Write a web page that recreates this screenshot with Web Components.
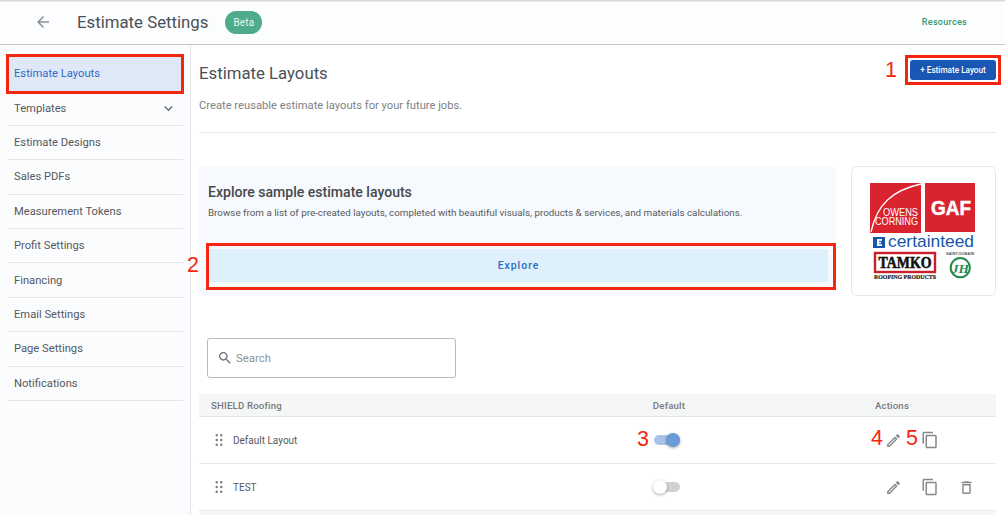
<!DOCTYPE html>
<html lang="en">
<head>
<meta charset="utf-8">
<title>Estimate Settings</title>
<style>
  html, body { margin: 0; height: 100%; overflow: hidden; }
  body { background: #fcfdfe; font-family: Roboto, "Liberation Sans", sans-serif; color: #4a4f54; }
</style>
</head>
<body>
<estimate-page></estimate-page>

<script>
const ICONS = {
  back: "M20 11H7.83l5.59-5.59L12 4l-8 8 8 8 1.41-1.41L7.83 13H20v-2z",
  chevron: "M7.41 8.59L12 13.17l4.59-4.58L18 10l-6 6-6-6z",
  search: "M15.5 14h-.79l-.28-.27C15.41 12.59 16 11.11 16 9.5 16 5.91 13.09 3 9.5 3S3 5.91 3 9.5 5.91 16 9.5 16c1.61 0 3.09-.59 4.23-1.57l.27.28v.79l5 4.99L20.49 19l-4.99-5zm-6 0C7.01 14 5 11.99 5 9.5S7.01 5 9.5 5 14 7.01 14 9.5 11.99 14 9.5 14z",
  edit: "M3 17.25V21h3.75L17.81 9.94l-3.75-3.75L3 17.25zM5.92 19H5v-.92l9.06-9.06.92.92L5.92 19zM20.71 5.63l-2.34-2.34c-.2-.2-.45-.29-.71-.29s-.51.1-.7.29l-1.83 1.83 3.75 3.75 1.83-1.83c.39-.39.39-1.02 0-1.41z",
  copy: "M16 1H4c-1.1 0-2 .9-2 2v14h2V3h12V1zm3 4H8c-1.1 0-2 .9-2 2v14c0 1.1.9 2 2 2h11c1.1 0 2-.9 2-2V7c0-1.1-.9-2-2-2zm0 16H8V7h11v14z",
  trash: "M6 19c0 1.1.9 2 2 2h8c1.1 0 2-.9 2-2V7H6v12zM8 9h8v10H8V9zm7.5-5l-1-1h-5l-1 1H5v2h14V4z",
  drag: "M9 4a1.7 1.7 0 1 0 0 3.4A1.7 1.7 0 0 0 9 4zm6 0a1.7 1.7 0 1 0 0 3.4A1.7 1.7 0 0 0 15 4zM9 10.3a1.7 1.7 0 1 0 0 3.4 1.7 1.7 0 0 0 0-3.4zm6 0a1.7 1.7 0 1 0 0 3.4 1.7 1.7 0 0 0 0-3.4zM9 16.6a1.7 1.7 0 1 0 0 3.4 1.7 1.7 0 0 0 0-3.4zm6 0a1.7 1.7 0 1 0 0 3.4 1.7 1.7 0 0 0 0-3.4z"
};

function icon(name, size, color) {
  return `<svg width="${size}" height="${size}" viewBox="0 0 24 24" fill="${color}" style="display:block;flex:none"><path d="${ICONS[name]}"/></svg>`;
}

customElements.define("app-header", class extends HTMLElement {
  constructor() {
    super();
    this.attachShadow({ mode: "open" }).innerHTML = `
      <style>
        :host { display: flex; align-items: center; height: 44px; box-sizing: content-box; background: #fcfdfe;
                border-bottom: 1px solid #c4c6c8; box-shadow: inset 0 3px 2px -2px #c9cacc; }
        .back { margin-left: 34px; }
        h1 { margin: 0 0 0 25px; font: 400 16.8px Roboto, sans-serif; color: #4b5056; }
        .beta { margin-left: 17px; width: 37px; height: 23px; border-radius: 12px; background: #4fab8a; color: #e9f6f1;
                display: flex; align-items: center; justify-content: center; font: 400 10px Roboto, sans-serif; letter-spacing: .2px; }
        .res { margin-left: auto; margin-right: 38px; font: 500 9px Roboto, sans-serif; color: #2f9a74; letter-spacing: .3px; }
      </style>
      <span class="back">${icon("back", 18, "#8a8f94")}</span>
      <h1>Estimate Settings</h1>
      <span class="beta">Beta</span>
      <span class="res">Resources</span>`;
  }
});

customElements.define("nav-item", class extends HTMLElement {
  constructor() {
    super();
    this.attachShadow({ mode: "open" }).innerHTML = `
      <style>
        :host { display: flex; align-items: center; justify-content: space-between; height: 34.4px; box-sizing: border-box;
                padding: 0 6px 0 6px; border-bottom: 1px solid #e3e5e7; font: 400 11.2px Roboto, sans-serif; color: #55595e; }
        :host([active]) { background: #dfe8f6; color: #2f6cc4; border-bottom-color: transparent; }
      </style>
      <slot></slot>${this.hasAttribute("chevron") ? icon("chevron", 17, "#6a6e73") : ""}`;
  }
});

customElements.define("side-nav", class extends HTMLElement {
  constructor() {
    super();
    this.attachShadow({ mode: "open" }).innerHTML = `
      <style>
        :host { display: block; flex: none; width: 190px; box-sizing: content-box; padding: 12px 0 0; background: #fbfcfe;
                border-right: 1px solid #e0e2e6; }
        div { margin: 0 7px 0 8px; }
      </style>
      <div><slot></slot></div>`;
  }
});

customElements.define("explore-card", class extends HTMLElement {
  constructor() {
    super();
    this.attachShadow({ mode: "open" }).innerHTML = `
      <style>
        :host { display: block; flex: 1; box-sizing: border-box; height: 130px; background: #f6f9fd; border-radius: 4px; padding: 18px 8px 0 9px; }
        h2 { margin: 0; font: 500 14.05px Roboto, sans-serif; color: #45494e; }
        p { margin: 7px 0 0; font: 400 9.83px Roboto, sans-serif; color: #55595e; }
        button { display: block; width: 100%; height: 33px; margin-top: 31px; border: 0; border-radius: 2px; background: #def0fb;
                 font: 500 10.4px Roboto, sans-serif; color: #2f6cc4; letter-spacing: 1px; padding: 0 0 0 1px; }
      </style>
      <h2>Explore sample estimate layouts</h2>
      <p>Browse from a list of pre-created layouts, completed with beautiful visuals, products &amp; services, and materials calculations.</p>
      <button>Explore</button>`;
  }
});

customElements.define("logo-card", class extends HTMLElement {
  constructor() {
    super();
    this.attachShadow({ mode: "open" }).innerHTML = `
      <style>
        :host { display: block; flex: none; width: 145px; height: 130px; box-sizing: border-box; background: #fff; border: 1px solid #e6e8ea; border-radius: 6px; }
        svg { display: block; margin: -1px; font-family: "Liberation Sans", sans-serif; }
      </style>
      <svg width="145" height="130" viewBox="0 0 145 130">
        <rect x="19" y="17" width="51" height="50" fill="#d9232e"/>
        <path d="M20 66 C26 38 42 24 70 18" fill="none" stroke="#fff" stroke-width="1.3"/>
        <text x="67" y="49.5" text-anchor="end" font-size="10" fill="#fff" textLength="35" lengthAdjust="spacingAndGlyphs">OWENS</text>
        <text x="67" y="59" text-anchor="end" font-size="10" fill="#fff" textLength="43" lengthAdjust="spacingAndGlyphs">CORNING</text>
        <rect x="74" y="17" width="50" height="49" fill="#d9232e"/>
        <text x="100" y="49" text-anchor="middle" font-size="21" font-weight="700" stroke="#fff" stroke-width=".5" fill="#fff" textLength="40" lengthAdjust="spacingAndGlyphs">GAF</text>
        <rect x="22" y="71" width="12" height="11" fill="#1756a9"/>
        <path d="M31 73h-5v7h5v-1.8h-3v-1h2v-1.4h-2v-1h3z" fill="#fff"/>
        <text x="37" y="81" font-size="17" fill="#1756a9" textLength="86" lengthAdjust="spacingAndGlyphs">certainteed</text>
        <rect x="24" y="87" width="60" height="19" fill="#fff" stroke="#c9202c" stroke-width="2.4"/>
        <text x="54" y="102" text-anchor="middle" font-family="Liberation Serif, serif" font-size="17" font-weight="700" stroke="#111" stroke-width=".6" fill="#111" textLength="53" lengthAdjust="spacingAndGlyphs">TAMKO</text>
        <text x="23" y="113" font-family="Liberation Serif, serif" font-size="6" font-weight="700" stroke="#222" stroke-width=".2" fill="#222" textLength="62" lengthAdjust="spacingAndGlyphs">ROOFING PRODUCTS</text>
        <text x="95" y="89" font-size="3" font-weight="700" fill="#555" textLength="28" lengthAdjust="spacingAndGlyphs">SAINT-GOBAIN</text>
        <circle cx="109.3" cy="101.7" r="9.6" fill="#fff" stroke="#1f8a48" stroke-width="2"/>
        <text x="109.3" y="106.5" text-anchor="middle" font-family="Liberation Serif, serif" font-size="13.5" font-style="italic" font-weight="700" fill="#1f8a48">JH</text>
      </svg>`;
  }
});

customElements.define("search-box", class extends HTMLElement {
  constructor() {
    super();
    this.attachShadow({ mode: "open" }).innerHTML = `
      <style>
        :host { display: flex; align-items: center; gap: 3px; box-sizing: border-box; width: 249px; height: 40px; margin-left: 8px; padding-left: 9px;
                background: #fff; border: 1px solid #b9bbbd; border-radius: 3px; font: 400 11.2px Roboto, sans-serif; color: #8d9196; letter-spacing: .1px; }
      </style>
      ${icon("search", 16, "#6e7277")}<span>Search</span>`;
  }
});

customElements.define("toggle-switch", class extends HTMLElement {
  constructor() {
    super();
    this.attachShadow({ mode: "open" }).innerHTML = `
      <style>
        :host { display: block; position: relative; width: 26px; height: 10px; border-radius: 5px; background: #cfd1d3; }
        i { position: absolute; top: -2px; left: -1px; width: 14px; height: 14px; border-radius: 50%; background: #fff; box-shadow: 0 1px 3px rgba(0,0,0,.35); }
        :host([on]) { background: #a9c4e8; }
        :host([on]) i { left: 12px; background: #6b9bd8; }
      </style>
      <i></i>`;
  }
});

customElements.define("layout-row", class extends HTMLElement {
  constructor() {
    super();
    const on = this.hasAttribute("on");
    const canDelete = this.hasAttribute("deletable");
    this.attachShadow({ mode: "open" }).innerHTML = `
      <style>
        :host { display: grid; grid-template-columns: 1fr 100px 200px; column-gap: 73px; align-items: center; height: 47px; box-sizing: border-box;
                padding-right: 4px; background: #fff; border-bottom: 1px solid #e7e9ea; font: 400 10px Roboto, sans-serif; color: #55595e; }
        .name { display: flex; align-items: center; gap: 5px; padding-left: 11px; }
        .def { display: flex; justify-content: center; padding-right: 4px; }
        .acts { display: flex; align-items: center; gap: 19px; padding-left: 93px; }
      </style>
      <div class="name">${icon("drag", 18, "#7c8085")}<slot></slot></div>
      <div class="def"><toggle-switch ${on ? "on" : ""}></toggle-switch></div>
      <div class="acts">${icon("edit", 17, "#85898e")}${icon("copy", 18, "#85898e")}${canDelete ? icon("trash", 17, "#85898e") : ""}</div>`;
  }
});

customElements.define("layouts-table", class extends HTMLElement {
  constructor() {
    super();
    this.attachShadow({ mode: "open" }).innerHTML = `
      <style>
        :host { display: block; margin-top: 16px; background: #f5f6f6; padding-bottom: 20px; }
        .head { display: grid; grid-template-columns: 1fr 100px 200px; column-gap: 73px; align-items: center; height: 23px; box-sizing: border-box; padding: 0 4px 0 12px;
                border-bottom: 1px solid #e2e4e5; font: 500 9.6px Roboto, sans-serif; color: #75797e; letter-spacing: .2px; }
        .head span + span { text-align: center; }
      </style>
      <div class="head"><span>SHIELD Roofing</span><span>Default</span><span>Actions</span></div>
      <slot></slot>`;
  }
});

customElements.define("estimate-main", class extends HTMLElement {
  constructor() {
    super();
    this.attachShadow({ mode: "open" }).innerHTML = `
      <style>
        :host { display: block; flex: 1; min-width: 0; padding: 0 9px 0 8px; background: #fff; }
        .top { display: flex; justify-content: space-between; align-items: flex-start; padding-top: 15px; }
        h2 { margin: 3px 0 0; font: 400 16.75px Roboto, sans-serif; color: #4b5056; }
        .add { width: 86px; height: 20px; border: 0; border-radius: 3px; background: #1a56b4; color: #fff; margin-right: 0;
               font: 500 8.2px Roboto, sans-serif; padding: 0; }
        .sub { margin: 16px 0 0; padding-bottom: 20px; border-bottom: 1px solid #e4e6e8; font: 400 11.2px Roboto, sans-serif; color: #7e8287; }
        .cards { display: flex; gap: 15px; margin-top: 33px; }
        .search { margin-top: 42px; }
      </style>
      <div class="top"><h2>Estimate Layouts</h2><button class="add">+ Estimate Layout</button></div>
      <p class="sub">Create reusable estimate layouts for your future jobs.</p>
      <div class="cards"><explore-card></explore-card><logo-card></logo-card></div>
      <div class="search"><search-box></search-box></div>
      <layouts-table>
        <layout-row on>Default Layout</layout-row>
        <layout-row deletable>TEST</layout-row>
      </layouts-table>`;
  }
});

// red boxes and numbers drawn over the screenshot
customElements.define("mark-up", class extends HTMLElement {
  constructor() {
    super();
    this.attachShadow({ mode: "open" }).innerHTML = `
      <style>
        :host { position: absolute; inset: 0; pointer-events: none; }
        b { position: absolute; box-sizing: border-box; border: 3px solid #f5260f; }
        span { position: absolute; transform: translate(-50%, -50%); font: 400 21.5px "Liberation Sans", sans-serif; color: #f5260f; }
      </style>
      <b style="left:6px;top:54px;width:178px;height:40px"></b>
      <b style="left:905px;top:55px;width:96px;height:30px"></b>
      <b style="left:206px;top:243px;width:630px;height:47px"></b>
      <span style="left:891px;top:70px">1</span>
      <span style="left:193px;top:265px">2</span>
      <span style="left:643px;top:439px">3</span>
      <span style="left:877px;top:438px">4</span>
      <span style="left:912px;top:438px">5</span>`;
  }
});

customElements.define("estimate-page", class extends HTMLElement {
  constructor() {
    super();
    this.attachShadow({ mode: "open" }).innerHTML = `
      <style>
        :host { display: flex; flex-direction: column; position: relative; height: 515px; overflow: hidden; }
        .body { display: flex; flex: 1; min-height: 0; }
      </style>
      <app-header></app-header>
      <div class="body">
        <side-nav>
          <nav-item active>Estimate Layouts</nav-item>
          <nav-item chevron>Templates</nav-item>
          <nav-item>Estimate Designs</nav-item>
          <nav-item>Sales PDFs</nav-item>
          <nav-item>Measurement Tokens</nav-item>
          <nav-item>Profit Settings</nav-item>
          <nav-item>Financing</nav-item>
          <nav-item>Email Settings</nav-item>
          <nav-item>Page Settings</nav-item>
          <nav-item>Notifications</nav-item>
        </side-nav>
        <estimate-main></estimate-main>
      </div>
      <mark-up></mark-up>`;
  }
});
</script>
</body>
</html>
